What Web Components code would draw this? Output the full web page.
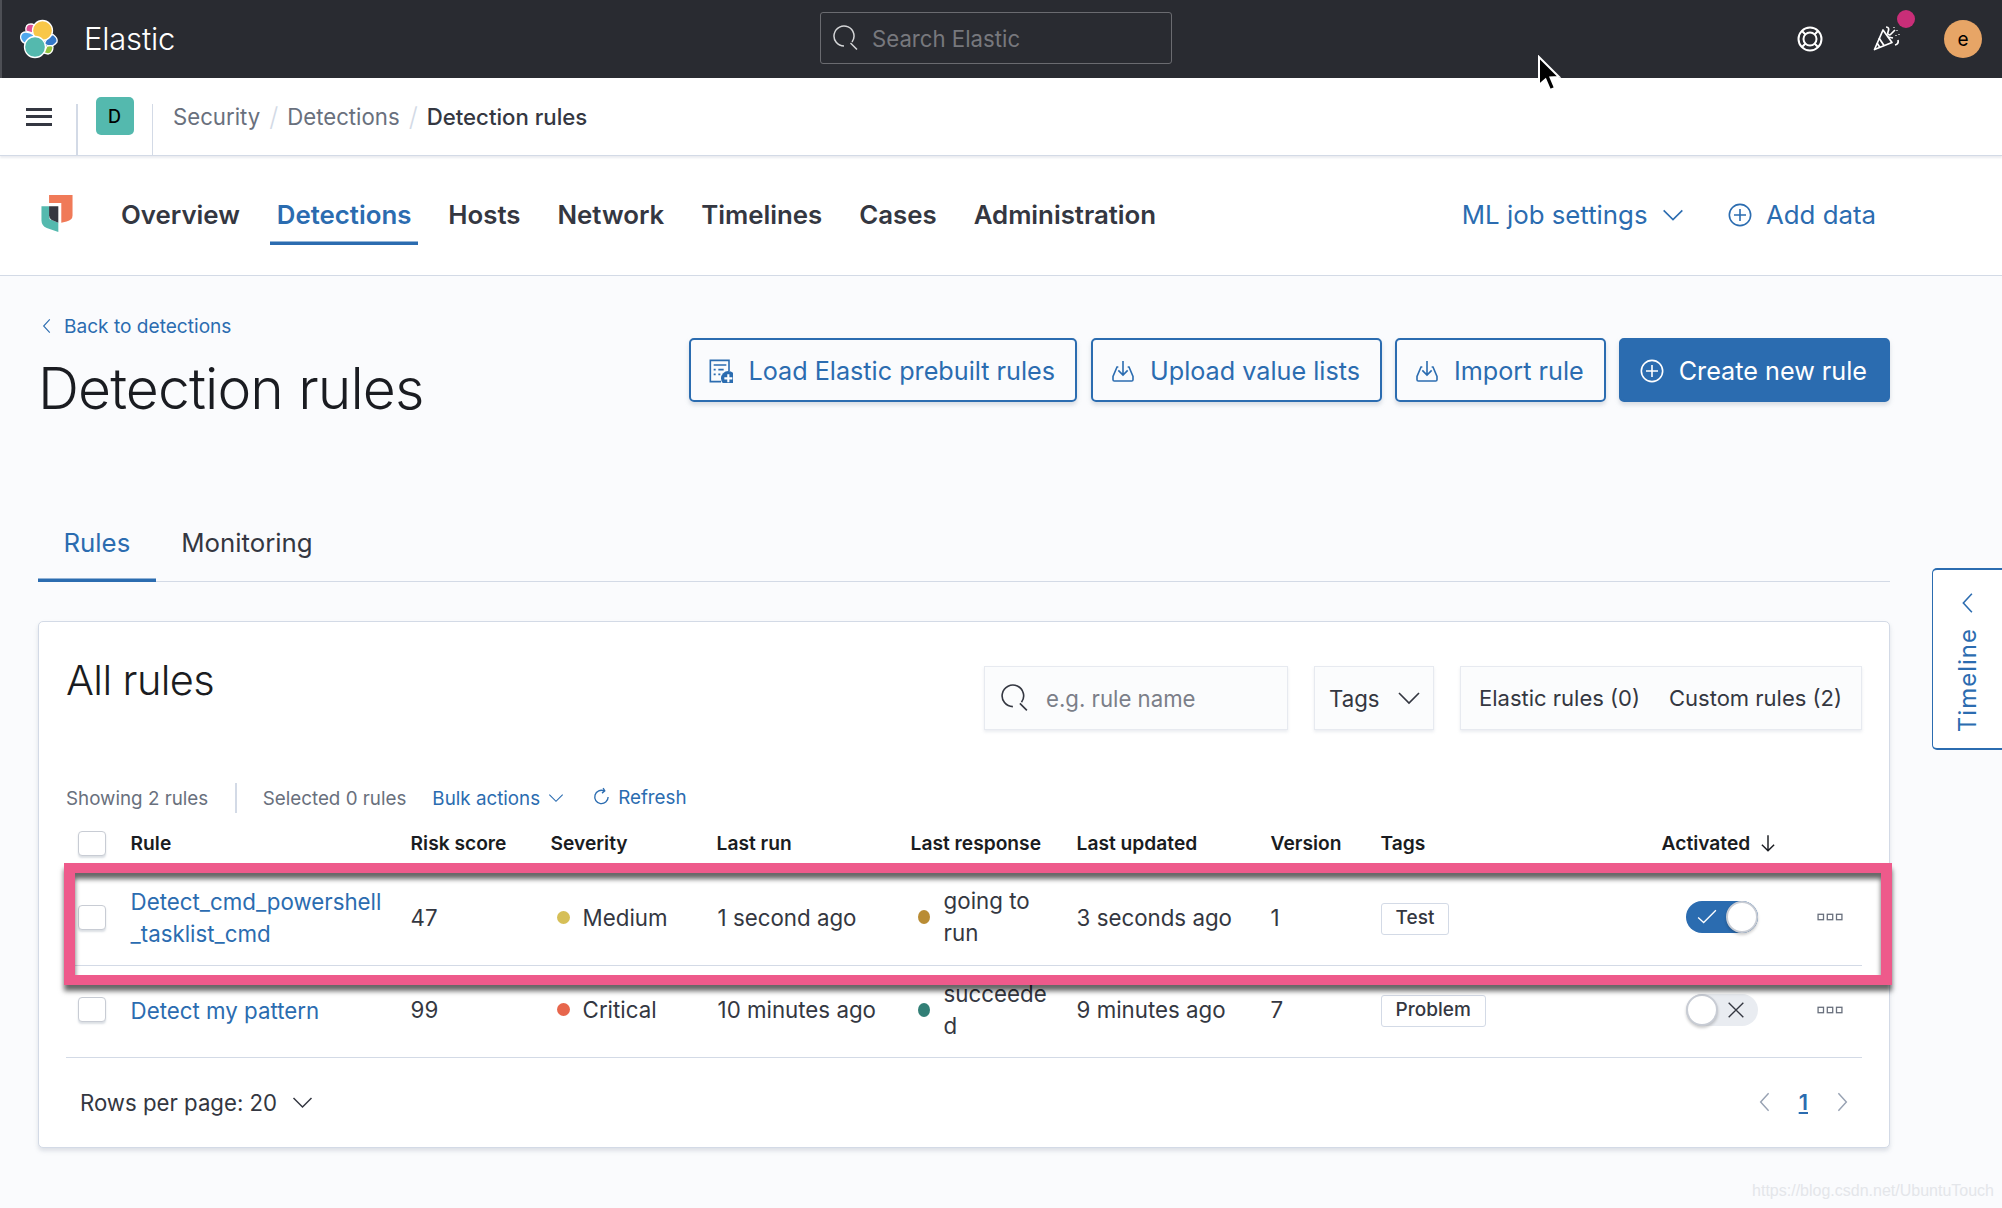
<!DOCTYPE html>
<html>
<head>
<meta charset="utf-8">
<title>Detection rules</title>
<style>
  html, body { margin: 0; padding: 0; }
  body {
    width: 2002px;
    height: 1208px;
    overflow: hidden;
    position: relative;
    background: #fafbfd;
    font-family: Inter, "Liberation Sans", sans-serif;
    color: #343741;
  }
</style>
</head>
<body>
<el-topbar></el-topbar>
<el-crumbs></el-crumbs>
<sec-nav></sec-nav>
<rules-page></rules-page>
<timeline-tab></timeline-tab>
<svg style="position:absolute;left:1535px;top:55px" width="28" height="40" viewBox="0 0 28 40">
  <path d="M4 2 V30 L10.500 24.500 L15 35 L20 33 L15.500 22.500 L24 22 Z" fill="#000" stroke="#fff" stroke-width="2"/>
</svg>
<div style="position:absolute;right:8px;bottom:8px;font:16px 'Liberation Sans',sans-serif;color:#e4e6ea">https://blog.csdn.net/UbuntuTouch</div>

<script>
const ICONS = {
  chevDown: '<path d="M3 6 L9 12 L15 6" fill="none" stroke="currentColor" stroke-width="1"/>',
  chevLeft: '<path d="M11.500 3 L6 9 L11.500 15" fill="none" stroke="currentColor" stroke-width="1"/>',
  chevRight: '<path d="M6.500 3 L12 9 L6.500 15" fill="none" stroke="currentColor" stroke-width="1"/>',
  plusRound: '<g fill="none" stroke="currentColor" stroke-width="1.200"><circle cx="9" cy="9" r="8"/><path d="M9 4.500 V13.500 M4.500 9 H13.500"/></g>',
  upload: '<g fill="none" stroke="currentColor" stroke-width="1.200"><path d="M5.500 6 H4.500 L1.500 13 V15.500 Q1.500 16.500 2.500 16.500 H15.500 Q16.500 16.500 16.500 15.500 V13 L13.500 6 H12.500"/><path d="M9 1.500 V12 M5.500 8.500 L9 12 L12.500 8.500"/></g>',
  prebuilt: '<g fill="none" stroke="currentColor" stroke-width="1.200"><path d="M9 17 H1 V1 H15 V9"/><path d="M3.500 4.500 H13 M3.500 8 H5 M7 8 H11 M3.500 11.500 H5 M7 11.500 H8.500"/></g><circle cx="14.500" cy="14.500" r="5.500" fill="currentColor"/><path d="M14.500 11.500 V17.500 M11.500 14.500 H17.500" stroke="#fff" stroke-width="1.600"/>',
  search: '<g fill="none" stroke="currentColor" stroke-width="1.500"><path d="M11 21 A10 10 0 1 1 19 17"/><path d="M17.500 18 L24 24.500"/></g>',
  refresh: '<g fill="none" stroke="currentColor" stroke-width="1.200"><path d="M11 3.500 A6 6 0 1 0 14.500 9"/><path d="M10 1 L11.500 3.500 L9 5.500"/></g>',
  arrowDown: '<path d="M9 2 V16 M3.500 10.500 L9 16 L14.500 10.500" fill="none" stroke="currentColor" stroke-width="1.300"/>',
  check: '<path d="M1 9.500 L6 14 L17 3" fill="none" stroke="currentColor" stroke-width="1.200"/>',
  cross: '<path d="M3 3 L15 15 M15 3 L3 15" fill="none" stroke="currentColor" stroke-width="1.100"/>',
  boxes: '<g fill="none" stroke="currentColor" stroke-width="1.200"><rect x="1" y="1" width="5" height="5"/><rect x="9.500" y="1" width="5" height="5"/><rect x="18" y="1" width="5" height="5"/></g>'
};

function icon(name, w, h, vb, extra) {
  return `<svg width="${w}" height="${h}" viewBox="${vb || '0 0 18 18'}" style="flex:none;display:block;${extra || ''}">${ICONS[name]}</svg>`;
}

class ElTopbar extends HTMLElement {
  constructor() {
    super();
    this.attachShadow({ mode: 'open' }).innerHTML = `
      <style>
        :host {
          display: flex;
          align-items: center;
          height: 78px;
          box-sizing: border-box;
          background: #292b31;
          border-left: 2px solid #4d4f55;
          position: relative;
          color: #fff;
          padding-left: 18px;
        }
        .name { font-size: 31px; font-weight: 300; margin: -2px 0 0 24px; letter-spacing: -0.2px; }
        .search {
          position: absolute;
          left: 818px;
          top: 12px;
          width: 352px;
          height: 52px;
          box-sizing: border-box;
          border: 1.500px solid #6a6b70;
          border-radius: 3px;
          display: flex;
          align-items: center;
          gap: 14px;
          padding-left: 12px;
          color: #77787d;
          font-size: 22.200px;
        }
        .search svg { color: #d5d6d8; }
        .help { position: absolute; left: 1793px; top: 24px; }
        .cheer { position: absolute; left: 1869px; top: 24px; }
        .badge { position: absolute; left: 1895px; top: 10px; width: 18px; height: 18px; border-radius: 50%; background: #c92e78; }
        .avatar {
          position: absolute;
          left: 1942px;
          top: 20px;
          width: 38px;
          height: 38px;
          border-radius: 50%;
          background: #e7a566;
          color: #000;
          font-size: 19px;
          display: flex;
          align-items: center;
          justify-content: center;
        }
      </style>
      <svg width="40" height="42" viewBox="20 18 40 42">
        <g stroke="#fff" stroke-width="1.300">
          <path d="M26 31 Q25 24 31 24 Q35 24 35 28 L33 33 Z" fill="#dd4f95"/>
          <path d="M20.500 37 Q21 32 26 32 Q30 32 34 35 L28 44 Q21 43 20.500 37 Z" fill="#4fa8ee"/>
          <path d="M49 35 L53 34.500 Q58 38 57 42 Q53 47 49 46 L44 44 Z" fill="#3478c8"/>
          <path d="M47 46 Q53 45 53 47 Q53 53 48 54 L44 53 Z" fill="#93c13e"/>
          <circle cx="42.500" cy="30.500" r="10" fill="#f8c748"/>
          <circle cx="35" cy="47" r="10.500" fill="#54b9ae"/>
        </g>
      </svg>
      <span class="name">Elastic</span>
      <div class="search">${icon('search', 25, 26, '0 0 25 26')}<span>Search Elastic</span></div>
      <svg class="help" width="30" height="30" viewBox="0 0 30 30" fill="none" stroke="#fff" stroke-width="2">
        <circle cx="15" cy="15" r="11.500"/><circle cx="15" cy="15" r="6.500"/>
        <path d="M7 7 L10.500 10.500 M23 7 L19.500 10.500 M7 23 L10.500 19.500 M23 23 L19.500 19.500"/>
      </svg>
      <svg class="cheer" width="30" height="30" viewBox="0 0 30 30" fill="none" stroke="#fff" stroke-width="1.700">
        <path d="M3.500 25.500 L12 6 L21 18.500 Z" stroke-linejoin="round"/>
        <path d="M8 14 L13 21.500 M6 19 L9 23.500"/>
        <path d="M15 3 Q19 3 17 8 Q16 11 19 11 M22 14 L17 13 M27 16 Q28 20 24 21 M19 11 L24 6"/>
        <path d="M23 3 V4 M26 6 V7 M28 10 V11 M25 11 V12" stroke-width="1.200"/>
      </svg>
      <span class="badge"></span>
      <span class="avatar">e</span>
    `;
  }
}

class ElCrumbs extends HTMLElement {
  constructor() {
    super();
    this.attachShadow({ mode: 'open' }).innerHTML = `
      <style>
        :host {
          display: flex;
          height: 78px;
          box-sizing: border-box;
          background: #fff;
          border-bottom: 1.500px solid #d3dae6;
          box-shadow: 0 2px 2px rgba(152, 162, 179, .2);
          position: relative;
          align-items: stretch;
        }
        .cell { display: flex; align-items: center; justify-content: center; box-sizing: border-box; }
        .menu { width: 76px; padding-left: 2px; }
        .menu i { display: block; width: 26px; height: 3px; background: #343741; margin: 4.500px 0; }
        .sep { width: 1.500px; background: #d3dae6; margin-top: 26px; }
        .space { width: 74px; padding-bottom: 1px; }
        .space b {
          width: 38px;
          height: 38px;
          border-radius: 5px;
          background: #54b9ae;
          color: #000;
          font-size: 18px;
          font-weight: 500;
          display: flex;
          align-items: center;
          justify-content: center;
        }
        .trail { display: flex; align-items: center; padding-left: 20px; gap: 9px; font-size: 22.200px; color: #69707d; }
        .trail em { font-style: normal; color: #d3dae6; font-size: 26px; font-weight: 300; }
        .trail strong { font-weight: 500; color: #343741; }
      </style>
      <div class="cell menu"><div><i></i><i></i><i></i></div></div>
      <div class="sep"></div>
      <div class="cell space"><b>D</b></div>
      <div class="sep"></div>
      <div class="trail"><span>Security</span><em>/</em><span>Detections</span><em>/</em><strong>Detection rules</strong></div>
    `;
  }
}

class SecNav extends HTMLElement {
  constructor() {
    super();
    const links = ['Overview', 'Detections', 'Hosts', 'Network', 'Timelines', 'Cases', 'Administration'];
    this.attachShadow({ mode: 'open' }).innerHTML = `
      <style>
        :host {
          display: flex;
          align-items: center;
          height: 120px;
          box-sizing: border-box;
          background: #fff;
          border-bottom: 1.500px solid #d3dae6;
          padding-left: 40px;
          font-size: 25.800px;
        }
        svg.logo { display: block; margin-right: 40px; margin-top: -4px; }
        nav { display: flex; gap: 23px; margin-top: -2px; }
        a { font-weight: 600; color: #343741; padding: 0 7px; height: 61px; box-sizing: border-box; display: flex; align-items: center; }
        a.on { color: #2b6cb0; box-shadow: inset 0 -3.500px 0 #2b6cb0; }
        .right { margin-left: auto; display: flex; align-items: center; color: #2b6cb0; padding-right: 126px; margin-top: -2px; }
      </style>
      <svg class="logo" width="34" height="39" viewBox="120 585 102 118">
        <path d="M147 588 H218 V650 Q218 664 200 668 L184 672 V612 H147 Z" fill="#f07a58"/>
        <path d="M124 622 H147 V655 Q147 662 155 664 L175 672 V700 L140 688 Q124 680 124 665 Z" fill="#54b9ae"/>
        <path d="M147 622 H175 V672 L155 664 Q147 660 147 650 Z" fill="#343741"/>
      </svg>
      <nav>${links.map(l => `<a class="${l === 'Detections' ? 'on' : ''}">${l}</a>`).join('')}</nav>
      <div class="right">
        <span>ML job settings</span>
        ${icon('chevDown', 28, 28, '0 0 18 18', 'margin:0 41px 0 11.500px')}
        ${icon('plusRound', 24, 24, '0 0 18 18', 'margin-right:14px')}
        <span>Add data</span>
      </div>
    `;
  }
}

class PageButton extends HTMLElement {
  constructor() {
    super();
    const fill = this.hasAttribute('fill');
    this.attachShadow({ mode: 'open' }).innerHTML = `
      <style>
        :host {
          display: inline-flex;
          align-items: center;
          gap: 15px;
          height: 64px;
          box-sizing: border-box;
          padding: 2px ${fill ? '21px 0 19px' : '20px 0 18px'};
          border-radius: 5px;
          border: 2px solid #2b6cb0;
          color: ${fill ? '#fff' : '#2b6cb0'};
          background: ${fill ? '#2b6cb0' : 'transparent'};
          font-size: 25.200px;
          box-shadow: 0 3px 4px rgba(152, 162, 179, .35);
          white-space: nowrap;
        }
      </style>
      ${icon(this.getAttribute('icon'), 24, 24)}
      <slot></slot>
    `;
  }
}

class FilterBox extends HTMLElement {
  constructor() {
    super();
    this.attachShadow({ mode: 'open' }).innerHTML = `
      <style>
        :host {
          display: flex;
          align-items: center;
          height: 64px;
          box-sizing: border-box;
          background: #fbfcfd;
          border: 1.500px solid #e7eaf0;
          box-shadow: 0 2px 3px rgba(152, 162, 179, .2);
          font-size: 22.200px;
          color: #343741;
          white-space: nowrap;
        }
      </style>
      <slot></slot>
    `;
  }
}

class RuleToggle extends HTMLElement {
  constructor() {
    super();
    const on = this.hasAttribute('on');
    this.attachShadow({ mode: 'open' }).innerHTML = `
      <style>
        :host {
          display: block;
          position: relative;
          width: 72px;
          height: 32px;
          border-radius: 16px;
          background: ${on ? '#2b6cb0' : '#e9ecf1'};
        }
        i {
          position: absolute;
          top: 0;
          ${on ? 'right: 0' : 'left: 0'};
          width: 28px;
          height: 28px;
          border: 2px solid #c8ccd4;
          border-radius: 50%;
          background: #fff;
          box-shadow: 0 2px 3px rgba(0, 0, 0, .2);
        }
        svg { position: absolute; ${on ? 'top: 6px; left: 11px; color: #fff' : 'top: 5px; right: 11px; color: #343741'}; }
      </style>
      ${on ? icon('check', 20, 20) : icon('cross', 22, 22)}
      <i></i>
    `;
  }
}

class RulesTable extends HTMLElement {
  constructor() {
    super();
    const rows = [
      { h: 103, pad: 'padding-top:6px', name: 'Detect_cmd_powershell<br>_tasklist_cmd', risk: '47', sev: 'Medium', sevC: '#d6bf57', run: '1 second ago', resC: '#b98c34', res: 'going to<br>run', upd: '3 seconds ago', ver: '1', tag: 'Test', on: true },
      { h: 92, pad: 'padding-bottom:4px', name: 'Detect my pattern', risk: '99', sev: 'Critical', sevC: '#e7664c', run: '10 minutes ago', resC: '#327f76', res: 'succeede<br>d', upd: '9 minutes ago', ver: '7', tag: 'Problem', on: false }
    ];
    const box = `<span class="check"></span>`;
    this.attachShadow({ mode: 'open' }).innerHTML = `
      <style>
        :host { display: block; font-size: 22.300px; color: #343741; }
        .row, .head {
          display: grid;
          grid-template-columns: 64.600px 280px 140px 166px 194px 166px 194px 110px 281px 155px 46px;
          align-items: center;
        }
        .head { height: 42px; padding-top: 2px; box-sizing: border-box; font-size: 19.200px; font-weight: 600; color: #1a1c21; }
        .row { border-bottom: 1.500px solid #d3dae6; box-sizing: border-box; }
        .check {
          display: block;
          width: 28px;
          height: 25px;
          margin-left: 12px;
          box-sizing: border-box;
          border: 1.500px solid #c8ccd4;
          border-radius: 4px;
          background: #fff;
          box-shadow: 0 2px 2px rgba(152, 162, 179, .35);
        }
        .name { color: #2b6cb0; line-height: 32px; position: relative; top: 1px; white-space: nowrap; }
        .run { padding-left: 1px; }
        .status { display: flex; align-items: center; }
        .status i { width: 13px; height: 13px; border-radius: 50%; margin: 0 13px 0 0; flex: none; }
        .sev { padding-left: 6px; }
        .res span { line-height: 32px; white-space: nowrap; }
        .tag {
          display: inline-block;
          box-sizing: border-box;
          height: 32px;
          line-height: 28px;
          padding: 0 14px;
          background: #fff;
          border: 1.500px solid #d3dae6;
          border-radius: 3px;
          font-size: 19px;
          font-weight: 500;
          position: relative;
          top: 1px;
        }
        rule-toggle { margin-left: 24px; }
        .more { color: #69707d; }
        .head .act { display: flex; align-items: center; gap: 8px; }
      </style>
      <div class="head">
        ${box}<span>Rule</span><span>Risk score</span><span>Severity</span><span>Last run</span><span>Last response</span><span>Last updated</span><span>Version</span><span>Tags</span>
        <span class="act">Activated ${icon('arrowDown', 20, 20)}</span><span></span>
      </div>
      ${rows.map(r => `
        <div class="row" style="height:${r.h}px;${r.pad}">
          ${box}
          <span class="name">${r.name}</span>
          <span>${r.risk}</span>
          <span class="status sev"><i style="background:${r.sevC}"></i>${r.sev}</span>
          <span class="run">${r.run}</span>
          <span class="status res"><i style="background:${r.resC};width:12px;height:14px;margin-left:7px;margin-right:14px"></i><span>${r.res}</span></span>
          <span>${r.upd}</span>
          <span>${r.ver}</span>
          <span><span class="tag">${r.tag}</span></span>
          <rule-toggle ${r.on ? 'on' : ''}></rule-toggle>
          <span class="more">${icon('boxes', 26, 8, '0 0 24 7')}</span>
        </div>`).join('')}
    `;
  }
}

class RulesCard extends HTMLElement {
  constructor() {
    super();
    this.attachShadow({ mode: 'open' }).innerHTML = `
      <style>
        :host {
          display: block;
          height: 527px;
          box-sizing: border-box;
          background: #fff;
          border: 1.500px solid #d3dae6;
          border-radius: 5px;
          box-shadow: 0 3px 4px rgba(152, 162, 179, .3);
          padding: 0 27px;
          position: relative;
        }
        .top { display: flex; align-items: flex-start; padding-top: 44px; height: 153px; box-sizing: border-box; }
        h2 { margin: -16px 0 0; font-size: 41.500px; font-weight: 300; color: #1a1c21; letter-spacing: -0.6px; line-height: 60px; }
        .filters { margin-left: auto; display: flex; gap: 26px; }
        .search { width: 304px; padding-left: 16px; gap: 18px; color: #7b7f89; }
        .search svg { color: #343741; }
        .tags { width: 120px; padding: 0 9px 0 14px; justify-content: space-between; }
        .group { padding: 0 18px; gap: 29px; width: 402px; box-sizing: border-box; font-size: 22px; }
        .bar { display: flex; align-items: center; height: 46px; font-size: 18.800px; color: #69707d; }
        .bar i { width: 1.500px; height: 30px; background: #d3dae6; margin: 0 26px 0 27px; }
        .bar .lnk { color: #2b6cb0; display: flex; align-items: center; }
        .foot { display: flex; align-items: center; padding: 0 7.500px 0 14px; height: 88px; font-size: 22.200px; }
        .foot .pg { margin-left: auto; display: flex; align-items: center; gap: 20.500px; color: #98a2b3; }
        .foot u { color: #2b6cb0; font-weight: 600; font-size: 22px; }
      </style>
      <div class="top">
        <h2>All rules</h2>
        <div class="filters">
          <filter-box class="search">${icon('search', 27, 28, '0 0 25 26')}<span>e.g. rule name</span></filter-box>
          <filter-box class="tags"><span>Tags</span>${icon('chevDown', 30, 30)}</filter-box>
          <filter-box class="group"><span>Elastic rules (0)</span><span>Custom rules (2)</span></filter-box>
        </div>
      </div>
      <div class="bar">
        <span>Showing 2 rules</span><i></i><span>Selected 0 rules</span>
        <span class="lnk" style="margin-left:26px">Bulk actions ${icon('chevDown', 20, 20, '0 0 18 18', 'margin-left:6px')}</span>
        <span class="lnk" style="margin:-2px 0 0 26px">${icon('refresh', 20, 20, '0 0 18 18', 'margin-right:6px')}Refresh</span>
      </div>
      <rules-table></rules-table>
      <div class="foot">
        <span>Rows per page: 20</span>${icon('chevDown', 27, 27, '0 0 18 18', 'margin-left:12px')}
        <div class="pg">${icon('chevLeft', 26, 26)}<u>1</u>${icon('chevRight', 26, 26)}</div>
      </div>
      <div style="position:absolute;left:24.500px;top:241px;width:1806px;height:102px;border:solid #ee5a8b;border-width:10px 11px;box-shadow:0 6px 5px rgba(0,0,0,.6),inset 0 6px 5px rgba(0,0,0,.6)"></div>
    `;
  }
}

class RulesPage extends HTMLElement {
  constructor() {
    super();
    this.attachShadow({ mode: 'open' }).innerHTML = `
      <style>
        :host { display: block; padding: 0 112px 0 38px; }
        .head { display: flex; height: 235px; box-sizing: border-box; align-items: flex-start; }
        .back { display: flex; align-items: center; gap: 10px; font-size: 19.100px; color: #2b6cb0; margin-top: 38px; }
        .back svg { margin-left: -1px; margin-right: -3px; }
        h1 { margin: 16px 0 0; font-size: 57px; font-weight: 300; line-height: 70px; color: #1a1c21; letter-spacing: -0.9px; }
        .btns { margin-left: auto; display: flex; gap: 13px; padding-top: 62px; }
        .btns page-button:first-child { margin-right: 1px; }
        .tabs { display: flex; border-bottom: 1.500px solid #d3dae6; height: 71px; box-sizing: border-box; font-size: 25.800px; margin-bottom: 39px; }
        .tabs span { padding: 0 25.500px 8px; display: flex; align-items: center; height: 71px; box-sizing: border-box; }
        .tabs .on { color: #2b6cb0; box-shadow: inset 0 -3.500px 0 #2b6cb0; }
      </style>
      <div class="head">
        <div>
          <div class="back">${icon('chevLeft', 20, 20)}<span>Back to detections</span></div>
          <h1>Detection rules</h1>
        </div>
        <div class="btns">
          <page-button icon="prebuilt">Load Elastic prebuilt rules</page-button>
          <page-button icon="upload">Upload value lists</page-button>
          <page-button icon="upload">Import rule</page-button>
          <page-button icon="plusRound" fill>Create new rule</page-button>
        </div>
      </div>
      <div class="tabs"><span class="on">Rules</span><span>Monitoring</span></div>
      <rules-card></rules-card>
    `;
  }
}

class TimelineTab extends HTMLElement {
  constructor() {
    super();
    this.attachShadow({ mode: 'open' }).innerHTML = `
      <style>
        :host {
          position: absolute;
          left: 1932px;
          top: 568px;
          width: 70px;
          height: 182px;
          box-sizing: border-box;
          background: #fff;
          border: 1.500px solid #2b6cb0;
          border-width: 2.500px 0 2.500px 1.500px;
          border-radius: 5px 0 0 5px;
          color: #2b6cb0;
          display: flex;
          flex-direction: column;
          align-items: center;
          padding-top: 19px;
          font-size: 24px;
        }
        span { writing-mode: vertical-rl; transform: rotate(180deg); margin-top: 11px; letter-spacing: 1px; }
      </style>
      ${icon('chevLeft', 28, 28)}
      <span>Timeline</span>
    `;
  }
}

customElements.define('el-topbar', ElTopbar);
customElements.define('el-crumbs', ElCrumbs);
customElements.define('sec-nav', SecNav);
customElements.define('page-button', PageButton);
customElements.define('filter-box', FilterBox);
customElements.define('rule-toggle', RuleToggle);
customElements.define('rules-table', RulesTable);
customElements.define('rules-card', RulesCard);
customElements.define('rules-page', RulesPage);
customElements.define('timeline-tab', TimelineTab);
</script>
</body>
</html>
